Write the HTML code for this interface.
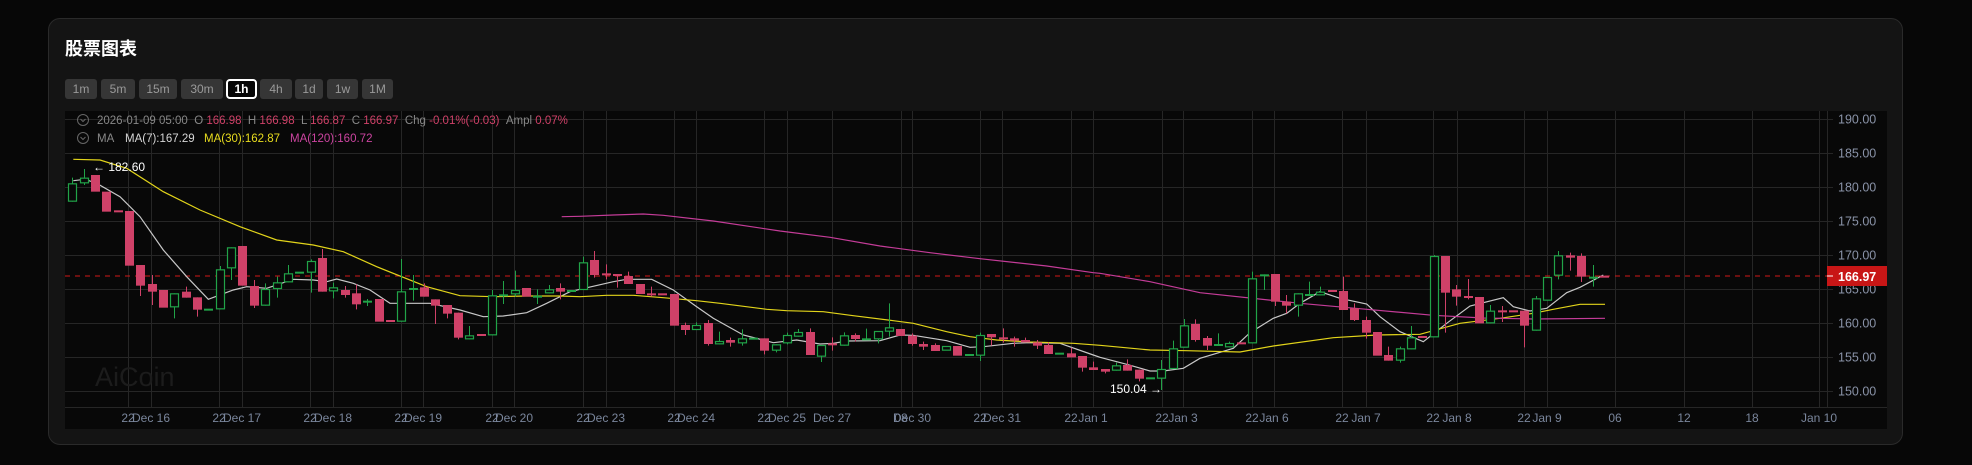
<!DOCTYPE html>
<html><head><meta charset="utf-8">
<style>
html,body{margin:0;padding:0;background:#070707;width:1972px;height:465px;overflow:hidden;font-family:"Liberation Sans","Noto Sans CJK SC",sans-serif;}
.card{position:absolute;left:48px;top:18px;width:1855px;height:427px;background:#141414;border:1px solid #2a2a2a;border-radius:12px;box-sizing:border-box;}
.title{position:absolute;left:65px;top:38px;font-size:18px;font-weight:bold;color:#fff;line-height:22px;}
.btn{position:absolute;top:79px;height:20px;line-height:20px;background:#363636;color:#9a9a9a;font-size:12px;text-align:center;border-radius:3px;box-sizing:border-box;}
.btn.on{background:#050505;color:#fff;border:2px solid #fff;line-height:16px;font-weight:bold;border-radius:4px;}
svg{position:absolute;left:0;top:0;}
</style></head><body>
<div class="card"></div>
<div class="title">股票图表</div>
<div class="btn" style="left:65px;width:32px">1m</div>
<div class="btn" style="left:101px;width:34px">5m</div>
<div class="btn" style="left:139px;width:38px">15m</div>
<div class="btn" style="left:181px;width:42px">30m</div>
<div class="btn on" style="left:226px;width:31px">1h</div>
<div class="btn" style="left:260px;width:32px">4h</div>
<div class="btn" style="left:295px;width:28px">1d</div>
<div class="btn" style="left:327px;width:31px">1w</div>
<div class="btn" style="left:362px;width:31px">1M</div>
<svg id="s" width="1972" height="465" xmlns="http://www.w3.org/2000/svg" font-family="Liberation Sans, sans-serif">
<rect x="65" y="111" width="1822" height="318" fill="#080808"/>
<g id="grid" stroke="#262626" stroke-width="1"></g>
<text x="95" y="386" font-size="27" fill="#1c1c1c">AiCoin</text>
<line x1="65" y1="276" x2="1827" y2="276" stroke="#d01818" stroke-width="1" stroke-dasharray="5,5"/>
<g id="ma"></g>
<g id="c"></g>
<g id="lab" font-size="12" fill="#7a869c"></g>
<g font-size="11.5">
<circle cx="83" cy="120" r="5.5" fill="none" stroke="#666"/><path d="M80.5 119 L83 121.5 L85.5 119" fill="none" stroke="#666"/>
<circle cx="83" cy="138" r="5.5" fill="none" stroke="#666"/><path d="M80.5 137 L83 139.5 L85.5 137" fill="none" stroke="#666"/>
<text x="97" y="124" fill="#888">2026-01-09 05:00 &#160;O <tspan fill="#cf4168">166.98</tspan> &#160;H <tspan fill="#cf4168">166.98</tspan> &#160;L <tspan fill="#cf4168">166.87</tspan> &#160;C <tspan fill="#cf4168">166.97</tspan> &#160;Chg <tspan fill="#cf4168">-0.01%(-0.03)</tspan> &#160;Ampl <tspan fill="#cf4168">0.07%</tspan></text>
<text x="97" y="142" fill="#888">MA</text>
<text x="125" y="142" fill="#d6d6d6">MA(7):167.29</text>
<text x="204" y="142" fill="#e8dc1e">MA(30):162.87</text>
<text x="290" y="142" fill="#cc44a0">MA(120):160.72</text>
<text x="93" y="171" fill="#fff" font-size="12">← 182.60</text>
<text x="1110" y="393" fill="#fff" font-size="12">150.04 →</text>
</g>
<rect x="1827" y="266" width="60" height="20" fill="#c81616"/>
<line x1="1827" y1="276" x2="1833" y2="276" stroke="#fff"/>
<text x="1838" y="281" font-size="12.5" font-weight="bold" fill="#fff">166.97</text>
</svg>
<script>
var NS="http://www.w3.org/2000/svg";
function el(p,t,a){var e=document.createElementNS(NS,t);for(var k in a)e.setAttribute(k,a[k]);p.appendChild(e);return e;}
var g=document.getElementById('grid');
var vx=[128,151,219,242,310,333,401,423,492,514,583,606,674,696,764,787,832,901,912,980,1002,1071,1093,1162,1183,1252,1274,1342,1366,1433,1457,1524,1547,1615,1684,1752,1819,1827];
vx.forEach(function(x){el(g,'line',{x1:x+.5,y1:111,x2:x+.5,y2:407});});
for(var k=0;k<9;k++){var y=119+34*k;el(g,'line',{x1:65,y1:y+.5,x2:1833,y2:y+.5});
 var t=el(document.getElementById('lab'),'text',{x:1838,y:y+4.5,'font-size':12.5,fill:'#8a93a8'});t.textContent=(190-5*k).toFixed(2);}
el(g,'line',{x1:65,y1:407.5,x2:1887,y2:407.5});
var lab=document.getElementById('lab');
var L=[[128,'22'],[151,'Dec 16'],[219,'22'],[242,'Dec 17'],[310,'22'],[333,'Dec 18'],[401,'22'],[423,'Dec 19'],[492,'22'],[514,'Dec 20'],[583,'22'],[606,'Dec 23'],[674,'22'],[696,'Dec 24'],[764,'22'],[787,'Dec 25'],[832,'Dec 27'],[901,'08'],[912,'Dec 30'],[980,'22'],[1002,'Dec 31'],[1071,'22'],[1093,'Jan 1'],[1162,'22'],[1183,'Jan 3'],[1252,'22'],[1274,'Jan 6'],[1342,'22'],[1366,'Jan 7'],[1433,'22'],[1457,'Jan 8'],[1524,'22'],[1547,'Jan 9'],[1615,'06'],[1684,'12'],[1752,'18'],[1819,'Jan 10']];
L.forEach(function(a){var t=el(lab,'text',{x:a[0],y:422,'text-anchor':'middle'});t.textContent=a[1];});
// candles: [color, bodyTop, bodyBot, wickTop, wickBot] in zoom coords (y=150+z/3)
var C=[['G',100,155,83,155],['G',83,100,57,105],['R',75,125],['R',125,185],['R',181,185],['R',183,347],['R',345,407,345,438],['R',402,425,375,465],['R',420,473],['G',430,472,430,505],['R',425,443,410,443],['R',442,479,442,500],['G',476,478],['G',358,478,348,478],['G',292,355,292,390],['R',288,407],['R',408,467,390,474],['G',417,467,400,467],['G',397,417,380,443],['G',370,397,345,397],['G',365,368],['G',333,368,328,428],['R',324,425,297,425],['G',412,424,398,445],['R',420,435,408,443],['R',430,463,403,478],['G',452,460,447,468],['R',447,515],['R',510,515],['G',424,515,327,515],['G',414,417,375,452],['R',412,440,400,440],['R',448,467,448,522],['R',465,491,465,505],['R',488,563,488,568],['G',556,568,528,568],['R',552,556],['G',436,556,420,556],['G',433,440,393,462],['G',420,433,362,440],['R',414,440],['G',437,440,418,462],['G',418,430,405,430],['R',414,425,400,448],['G',420,425],
['G',337,420,320,420],['R',330,375,303,383],['R',370,375,343,388],['R',372,378,372,413],['R',378,402,365,402],['R',402,432],['R',430,433,410,440],['R',430,433],['R',432,527],['R',525,540,518,555],['G',525,540,517,540],['R',519,582,510,587],['G',573,583,545,583],['R',570,578,563,590],['G',565,580,538,587],['G',563,566],['R',565,602,565,613],['G',583,602,583,607],['G',555,580,548,583],['G',546,560,537,560],['R',546,615,535,615],['G',585,620,585,636],['R',580,585,562,602],['G',556,587,547,587],['R',555,567,550,575],['G',565,568,536,568],['G',543,568,543,580],['G',532,545,460,560],['R',537,558],['R',557,582,550,587],['R',582,590,575,600],['R',585,603,580,603],['G',588,602],['R',588,617],['G',612,617],['G',555,617,548,633],['R',552,562,552,587],['R',562,568,535,578],['R',565,572,560,590],['R',570,577,563,577],['R',577,587,570,597],['R',585,612,577,612],['G',608,612],['R',610,622,593,622],['R',618,653,618,665],['R',652,660,635,660],
['R',657,665,657,670],['G',646,662,638,662],['R',645,662,628,662],['R',659,686,659,694],['G',682,686],['G',657,686,630,720],['G',595,657,572,657],['G',526,593,507,593],['R',522,570,508,575],['R',564,587,558,600],['G',582,586,550,586],['G',579,592,575,592],['R',577,580],['G',385,580,365,580],['G',373,381,373,420],['R',372,455,372,468],['R',455,467,435,490],['G',430,467,430,500],['G',432,436,395,436],['G',425,436,410,436],['R',420,425],['R',423,480,380,480],['R',475,510,460,513],['R',510,548,500,566],['R',546,617],['R',615,632,590,632],['G',595,632,590,638],['G',562,598,528,598],['R',558,563],['G',318,562,315,562],['R',318,428,318,548],['R',418,440,405,467],['R',438,443,387,448],['R',441,520],['G',482,520,465,520],['R',481,484,468,516],['R',481,484],['R',482,527,482,592],['G',445,542,438,542],['G',381,452],['G',316,377,303,388],['R',316,323,308,362],['R',318,380,310,396],['G',380,387,345,410],['R',377,380]];
var cg=document.getElementById('c');
function Y(z){return 150+z/3;}
C.forEach(function(c,i){var x=Math.round(72.3+i*11.345);var red=c[0]=='R';var col=red?'#cf4168':'#21a348';
 var bt=Y(c[1]),bb=Y(c[2]);if(bb-bt<2)bb=bt+2;
 if(c.length>3)el(cg,'line',{x1:x+.5,y1:Y(c[3]),x2:x+.5,y2:Y(c[4]),stroke:col,'stroke-width':1});
 if(red)el(cg,'rect',{x:x-4,y:bt,width:9,height:bb-bt,fill:col});
 else if(bb-bt<=3)el(cg,'rect',{x:x-4,y:bt,width:9,height:2,fill:col});
 else el(cg,'rect',{x:x-3.5,y:bt+.5,width:8,height:bb-bt-1,fill:'#080808',stroke:col,'stroke-width':1.2});
});
function poly(segs,col){var pts=[];segs.forEach(function(s){var ox=s[0];s[1].forEach(function(p){pts.push((ox+p[0]/3).toFixed(1)+','+Y(p[1]).toFixed(1));});});
 el(document.getElementById('ma'),'polyline',{points:pts.join(' '),fill:'none',stroke:col,'stroke-width':1.2});}
poly([[60,[[40,92],[75,88],[110,100],[180,140],[240,200],[310,300],[380,380],[445,448],[520,420],[560,410],[620,415],[700,388],[760,390],[800,395],[830,387],[880,400],[930,420],[990,460],[1110,460],[1200,480],[1270,500],[1330,498],[1400,488],[1460,460],[1530,425]]],[580,[[0,418],[100,395],[140,388],[215,388],[280,420],[350,470],[400,505],[490,555],[580,578],[650,570],[720,582],[760,580],[800,573],[900,572],[960,555],[1000,556],[1100,572],[1170,592],[1210,590],[1300,580],[1350,578],[1440,580],[1540,615]]],[1100,[[0,622],[80,643],[150,663],[190,663],[250,655],[300,625],[400,595],[450,548],[520,505],[560,490],[600,460],[660,425],[720,445],[800,462],[840,500],[900,545],[970,575],[1040,520],[1110,468],[1210,443],[1240,470],[1290,483],[1340,475],[1400,428],[1440,412],[1510,375]]]],'#c8c8c8');
poly([[60,[[40,28],[120,30],[200,55],[310,125],[420,180],[540,230],[650,270],[760,285],[850,305],[950,350],[1100,410],[1200,437],[1300,440],[1400,438],[1500,438]]],[580,[[0,440],[80,436],[160,436],[250,443],[350,452],[420,460],[560,478],[620,482],[730,485],[820,497],[940,512],[1000,520],[1100,545],[1170,560],[1250,570],[1350,576],[1480,580]]],[1100,[[0,586],[150,600],[260,602],[420,606],[520,588],[700,563],[830,555],[960,553],[1080,520],[1200,505],[1300,490],[1360,478],[1440,463],[1515,463]]]],'#e2d41a');
poly([[60,[[1505,200]]],[580,[[0,199],[100,195],[190,192],[250,196],[400,213],[600,243],[750,262],[900,288],[1050,308],[1200,326],[1400,348],[1540,368]]],[1100,[[0,370],[150,395],[300,428],[600,460],[800,478],[1000,496],[1150,504],[1300,507],[1515,505]]]],'#c43c98');
</script>
</body></html>
